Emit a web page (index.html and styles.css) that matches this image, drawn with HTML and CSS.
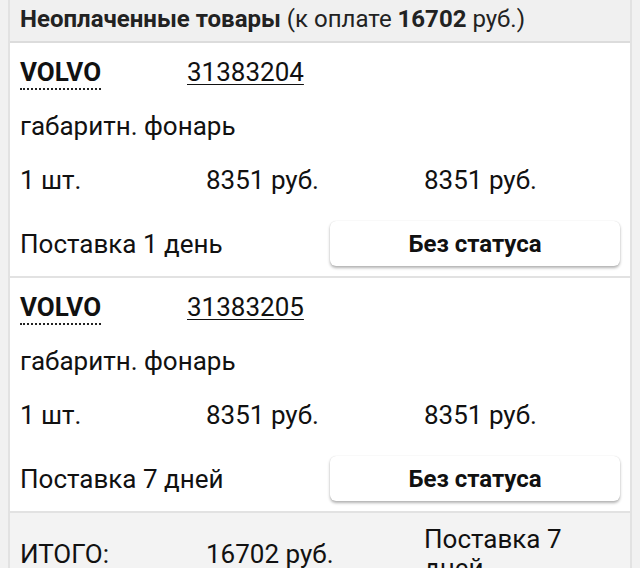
FILE: index.html
```html
<!DOCTYPE html>
<html lang="ru">
<head>
  <meta charset="UTF-8" />
  <meta name="viewport" content="width=device-width, initial-scale=1.0" />
  <title>Неоплаченные товары</title>
  <link rel="stylesheet" href="styles.css">
</head>
<body>
  <div class="card">
    <div class="card-head">
      <b>Неоплаченные товары</b> (к оплате <b>16702</b> руб.)
    </div>

    <div class="item">
      <div class="row">
        <span class="col-brand"><span class="brand">VOLVO</span></span>
        <a class="article" href="#">31383204</a>
      </div>
      <div class="row">габаритн. фонарь</div>
      <div class="row">
        <span class="col-qty">1 шт.</span>
        <span class="col-price">8351 руб.</span>
        <span>8351 руб.</span>
      </div>
      <div class="row-status">
        <span class="delivery">Поставка 1 день</span>
        <button class="status-btn">Без статуса</button>
      </div>
    </div>

    <div class="item">
      <div class="row">
        <span class="col-brand"><span class="brand">VOLVO</span></span>
        <a class="article" href="#">31383205</a>
      </div>
      <div class="row">габаритн. фонарь</div>
      <div class="row">
        <span class="col-qty">1 шт.</span>
        <span class="col-price">8351 руб.</span>
        <span>8351 руб.</span>
      </div>
      <div class="row-status">
        <span class="delivery">Поставка 7 дней</span>
        <button class="status-btn">Без статуса</button>
      </div>
    </div>

    <div class="total">
      <span class="col-qty">ИТОГО:</span>
      <span class="col-price">16702 руб.</span>
      <span class="total-delivery">Поставка 7 дней</span>
    </div>
  </div>
</body>
</html>
```

FILE: styles.css
```css
body {
  margin: 0;
  padding: 0;
  background: #f1f1f1;
  font-family: Roboto, 'Noto Sans', sans-serif;
  color: #111;
}

.card {
  margin: 0 8px;
  background: #fff;
  border-left: 2px solid #e2e2e2;
  border-right: 2px solid #e2e2e2;
}

.card-head {
  height: 41px;
  line-height: 38px;
  padding: 0 10px;
  background: #f0f0f0;
  border-bottom: 2px solid #dcdcdc;
  font-size: 24px;
  color: #222;
  white-space: nowrap;
}

.item {
  padding: 2px 10px 10px;
  border-bottom: 2px solid #e2e2e2;
  font-size: 26px;
}

.row {
  display: flex;
  align-items: center;
  height: 54px;
}

.col-brand {
  width: 167px;
}

.brand {
  font-weight: bold;
  border-bottom: 2px dotted #222;
  padding-bottom: 1px;
}

.article {
  color: #111;
  text-decoration: underline;
  text-underline-offset: 3px;
  text-decoration-thickness: 1px;
}

.col-qty {
  width: 186px;
  flex-shrink: 0;
}

.col-price {
  width: 218px;
  flex-shrink: 0;
}

.row-status {
  display: flex;
  align-items: center;
  justify-content: space-between;
  margin-top: 14px;
  height: 45px;
}

.status-btn {
  width: 290px;
  height: 45px;
  background: #fff;
  border: none;
  border-radius: 6px;
  box-shadow: 0 2px 3px rgba(0, 0, 0, 0.3), 0 0 1px rgba(0, 0, 0, 0.15);
  font-family: Roboto, 'Noto Sans', sans-serif;
  font-size: 24px;
  font-weight: bold;
  color: #111;
}

.total {
  display: flex;
  align-items: center;
  padding: 12px 10px;
  background: #f3f3f3;
  font-size: 26px;
}

.total-delivery {
  width: 190px;
  line-height: 29px;
}
```
